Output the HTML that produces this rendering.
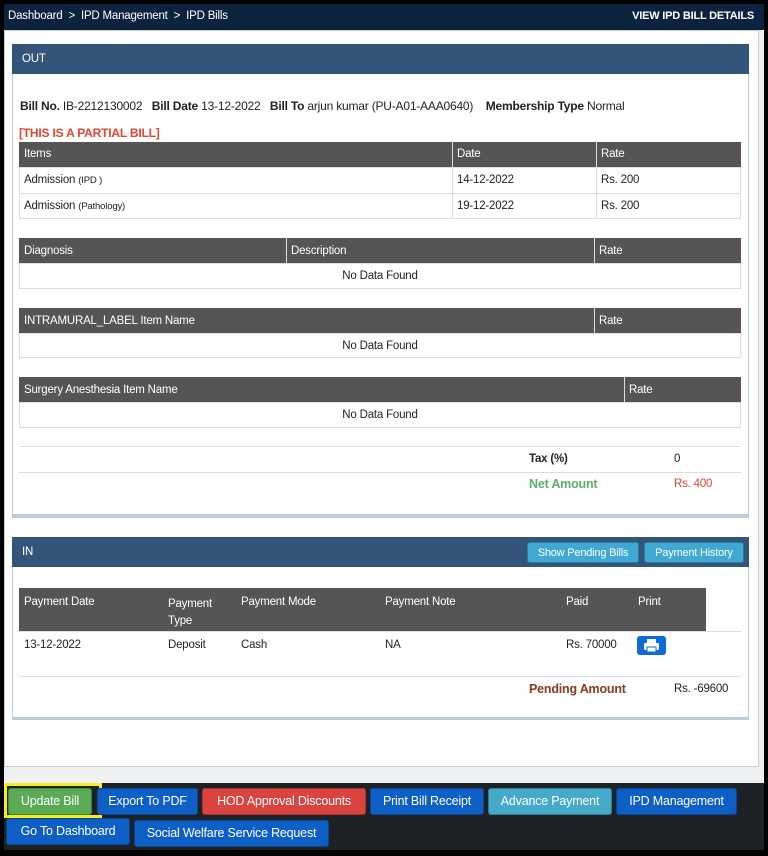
<!DOCTYPE html><html><head><style>
*{margin:0;padding:0;box-sizing:border-box}
body{width:768px;height:856px;background:#000;font-family:"Liberation Sans",sans-serif;font-size:11.5px;color:#222;position:relative;overflow:hidden;letter-spacing:-0.2px}
.a{position:absolute}
.hd{background:#555;color:#fff}
.btn{position:absolute;color:#fff;font-size:12.5px;text-align:center;line-height:25px;border-radius:3px;border:1px solid rgba(0,0,0,.25)}
.b{background:#0d5fc6}
</style></head><body>
<div class="a" style="left:4px;top:4px;width:760px;height:26px;background:#0c2340"></div>
<div class="a" style="left:8px;top:10px;color:#fff;font-size:11.5px">Dashboard &nbsp;&gt;&nbsp; IPD Management &nbsp;&gt;&nbsp; IPD Bills</div>
<div class="a" style="right:14px;top:10px;color:#fff;font-weight:bold;font-size:11px">VIEW IPD BILL DETAILS</div>
<div class="a" style="left:4px;top:30px;width:760px;height:753px;background:#eef0f2"></div>
<div class="a" style="left:4px;top:30px;width:755px;height:737px;background:#fff;border:1px solid #ccc"></div>

<!-- OUT panel -->
<div class="a" style="left:12px;top:44px;width:737px;height:474px;border:1px solid #b8cde0;border-bottom:4px solid #b8cde0"></div>
<div class="a" style="left:12px;top:44px;width:737px;height:30px;background:#34557a;color:#fff;padding:9px 10px">OUT</div>
<div class="a" style="left:20px;top:99px;font-size:12px"><b>Bill No.</b> IB-2212130002 &nbsp; <b>Bill Date</b> 13-12-2022 &nbsp; <b>Bill To</b> arjun kumar (PU-A01-AAA0640) &nbsp; &nbsp;<b>Membership Type</b> Normal</div>
<div class="a" style="left:19px;top:126px;color:#e8432b;font-weight:bold;font-size:12px">[THIS IS A PARTIAL BILL]</div>

<div class="a hd" style="left:19px;top:142px;width:722px;height:25px"></div>
<div class="a" style="left:24px;top:148px;color:#fff">Items</div><div class="a" style="left:457px;top:148px;color:#fff">Date</div><div class="a" style="left:601px;top:148px;color:#fff">Rate</div>
<div class="a" style="left:19px;top:167px;width:722px;height:52px;border:1px solid #ddd"></div>
<div class="a" style="left:19px;top:193px;width:722px;height:1px;background:#ddd"></div>
<div class="a" style="left:452px;top:142px;width:1px;height:77px;background:#ddd"></div><div class="a" style="left:596px;top:142px;width:1px;height:77px;background:#ddd"></div>
<div class="a" style="left:24px;top:174px">Admission <small>(IPD )</small></div><div class="a" style="left:457px;top:174px">14-12-2022</div><div class="a" style="left:601px;top:174px">Rs. 200</div>
<div class="a" style="left:24px;top:200px">Admission <small>(Pathology)</small></div><div class="a" style="left:457px;top:200px">19-12-2022</div><div class="a" style="left:601px;top:200px">Rs. 200</div>

<div class="a hd" style="left:19px;top:238px;width:722px;height:25px"></div>
<div class="a" style="left:286px;top:238px;width:1px;height:25px;background:#ddd"></div><div class="a" style="left:594px;top:238px;width:1px;height:25px;background:#ddd"></div>
<div class="a" style="left:24px;top:245px;color:#fff">Diagnosis</div><div class="a" style="left:291px;top:245px;color:#fff">Description</div><div class="a" style="left:599px;top:245px;color:#fff">Rate</div>
<div class="a" style="left:19px;top:263px;width:722px;height:26px;border:1px solid #ddd;text-align:center;line-height:24px">No Data Found</div>

<div class="a hd" style="left:19px;top:308px;width:722px;height:25px"></div>
<div class="a" style="left:594px;top:308px;width:1px;height:25px;background:#ddd"></div>
<div class="a" style="left:24px;top:315px;color:#fff">INTRAMURAL_LABEL Item Name</div><div class="a" style="left:599px;top:315px;color:#fff">Rate</div>
<div class="a" style="left:19px;top:333px;width:722px;height:25px;border:1px solid #ddd;text-align:center;line-height:24px">No Data Found</div>

<div class="a hd" style="left:19px;top:377px;width:722px;height:25px"></div>
<div class="a" style="left:624px;top:377px;width:1px;height:25px;background:#ddd"></div>
<div class="a" style="left:24px;top:384px;color:#fff">Surgery Anesthesia Item Name</div><div class="a" style="left:629px;top:384px;color:#fff">Rate</div>
<div class="a" style="left:19px;top:402px;width:722px;height:26px;border:1px solid #ddd;text-align:center;line-height:24px">No Data Found</div>

<div class="a" style="left:19px;top:446px;width:722px;height:1px;background:#ddd"></div>
<div class="a" style="left:19px;top:472px;width:722px;height:1px;background:#ddd"></div>
<div class="a" style="left:529px;top:453px;font-weight:bold">Tax (%)</div><div class="a" style="left:674px;top:453px">0</div>
<div class="a" style="left:529px;top:477px;font-weight:bold;color:#5cae6a;font-size:12.5px">Net Amount</div><div class="a" style="left:674px;top:478px;color:#e8432b">Rs. 400</div>

<!-- IN panel -->
<div class="a" style="left:12px;top:537px;width:737px;height:183px;border:1px solid #b8cde0;border-bottom:3px solid #b8cde0"></div>
<div class="a" style="left:12px;top:537px;width:737px;height:30px;background:#34557a;color:#fff;padding:9px 10px">IN</div>
<div class="btn" style="left:527px;top:542px;width:112px;height:21px;line-height:20px;background:#3fa9d3;font-size:11px">Show Pending Bills</div>
<div class="btn" style="left:644px;top:542px;width:100px;height:21px;line-height:20px;background:#3fa9d3;font-size:11px">Payment History</div>
<div class="a hd" style="left:19px;top:588px;width:687px;height:43px"></div>
<div class="a" style="left:24px;top:596px;color:#fff">Payment Date</div>
<div class="a" style="left:168px;top:596px;color:#fff;line-height:17px">Payment<br>Type</div>
<div class="a" style="left:241px;top:596px;color:#fff">Payment Mode</div>
<div class="a" style="left:385px;top:596px;color:#fff">Payment Note</div>
<div class="a" style="left:566px;top:596px;color:#fff">Paid</div>
<div class="a" style="left:638px;top:596px;color:#fff">Print</div>
<div class="a" style="left:19px;top:631px;width:722px;height:1px;background:#ddd"></div>
<div class="a" style="left:24px;top:639px">13-12-2022</div><div class="a" style="left:168px;top:639px">Deposit</div><div class="a" style="left:241px;top:639px">Cash</div><div class="a" style="left:385px;top:639px">NA</div><div class="a" style="left:566px;top:639px">Rs. 70000</div>
<div class="a" style="left:637px;top:636px;width:29px;height:19px;background:#0d6ad6;border-radius:3px">
<svg width="29" height="19" viewBox="0 0 29 19"><rect x="10" y="3" width="9" height="5" fill="#fff"/><rect x="7" y="7" width="15" height="7" rx="1.5" fill="#fff"/><rect x="10" y="11" width="9" height="5" fill="#fff" stroke="#0d6ad6"/></svg></div>
<div class="a" style="left:19px;top:676px;width:722px;height:1px;background:#ddd"></div>
<div class="a" style="left:529px;top:682px;font-weight:bold;color:#8b3a1f;font-size:12.5px">Pending Amount</div><div class="a" style="left:674px;top:683px">Rs. -69600</div>

<!-- footer -->
<div class="a" style="left:4px;top:783px;width:760px;height:67px;background:#1c2226"></div>
<div class="a" style="left:4px;top:783px;width:98px;height:35px;border:3px solid #f5ee1a"></div>
<div class="btn" style="left:8px;top:788px;width:84px;background:#5bab55">Update Bill</div>
<div class="btn b" style="left:97px;top:788px;width:101px">Export To PDF</div>
<div class="btn" style="left:202px;top:788px;width:164px;background:#d9443f">HOD Approval Discounts</div>
<div class="btn b" style="left:370px;top:788px;width:114px">Print Bill Receipt</div>
<div class="btn" style="left:488px;top:788px;width:124px;background:#45a9c9">Advance Payment</div>
<div class="btn b" style="left:616px;top:788px;width:121px">IPD Management</div>
<div class="btn b" style="left:6px;top:818px;width:124px">Go To Dashboard</div>
<div class="btn b" style="left:134px;top:820px;width:195px">Social Welfare Service Request</div>
</body></html>
